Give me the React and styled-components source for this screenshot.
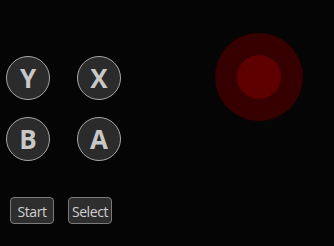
import React from "react";
import styled, { createGlobalStyle } from "styled-components";

const Global = createGlobalStyle`
  html, body {
    margin: 0;
    padding: 0;
    background: #050505;
  }
  body {
    font-family: "Open Sans", "Noto Sans", sans-serif;
  }
`;

const Screen = styled.div`
  width: 334px;
  height: 246px;
  background: #050505;
  display: flex;
  justify-content: space-between;
  box-sizing: border-box;
  padding: 33px 31px 0 6px;
  overflow: hidden;
`;

const LeftSide = styled.div`
  display: flex;
  flex-direction: column;
  padding-top: 23px;
`;

const FaceGrid = styled.div`
  display: grid;
  grid-template-columns: 44px 44px;
  grid-auto-rows: 44px;
  column-gap: 27px;
  row-gap: 17px;
`;

const FaceButton = styled.button`
  width: 44px;
  height: 44px;
  border-radius: 50%;
  border: 1px solid #a8a8a8;
  background: #2b2b2b;
  color: #c8c8c8;
  font-family: "Open Sans", sans-serif;
  font-weight: 700;
  font-size: 26px;
  line-height: 1;
  padding: 0;
  display: flex;
  align-items: center;
  justify-content: center;
  box-sizing: border-box;
`;

const MenuRow = styled.div`
  display: flex;
  gap: 14px;
  margin-top: 36px;
  padding-left: 4px;
`;

const MenuButton = styled.button`
  height: 27px;
  width: 44px;
  border: 1px solid #7a7a7a;
  border-radius: 4px;
  background: #2e2e2e;
  color: #d0d0d0;
  font-family: "Open Sans", sans-serif;
  font-size: 14px;
  letter-spacing: -0.4px;
  line-height: 1;
  padding: 2px 0 0;
  box-sizing: border-box;
  display: flex;
  align-items: center;
  justify-content: center;
`;

const Stick = styled.div`
  width: 88px;
  height: 88px;
  border-radius: 50%;
  background: #360000;
  display: flex;
  align-items: center;
  justify-content: center;
`;

const StickKnob = styled.div`
  width: 44px;
  height: 44px;
  border-radius: 50%;
  background: #5e0000;
`;

export default function App() {
  return (
    <>
      <Global />
      <Screen>
        <LeftSide>
          <FaceGrid>
            <FaceButton>Y</FaceButton>
            <FaceButton>X</FaceButton>
            <FaceButton>B</FaceButton>
            <FaceButton>A</FaceButton>
          </FaceGrid>
          <MenuRow>
            <MenuButton>Start</MenuButton>
            <MenuButton>Select</MenuButton>
          </MenuRow>
        </LeftSide>
        <Stick>
          <StickKnob />
        </Stick>
      </Screen>
    </>
  );
}
